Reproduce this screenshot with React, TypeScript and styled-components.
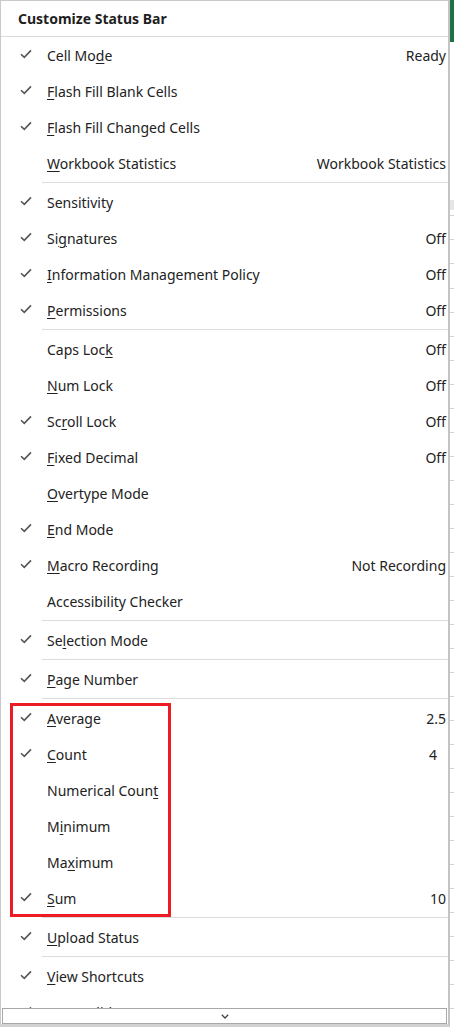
import React from 'react';
import styled, { createGlobalStyle } from 'styled-components';

const GlobalStyle = createGlobalStyle`
  html, body {
    margin: 0;
    padding: 0;
    background: #ffffff;
  }
  body {
    font-family: 'Noto Sans', 'Open Sans', sans-serif;
    color: #222;
  }
`;

const Screen = styled.div`
  display: flex;
  width: 454px;
  height: 1027px;
  overflow: hidden;
`;

const Menu = styled.div`
  position: relative;
  box-sizing: border-box;
  width: 450px;
  height: 1027px;
  display: flex;
  flex-direction: column;
  background: #fff;
  border: 1px solid #c9c9c9;
  border-right: 2px solid #c4c4c4;
  border-bottom: 3px solid #d2d2d2;
`;

const Header = styled.div`
  flex: none;
  height: 35px;
  display: flex;
  align-items: center;
  padding-left: 17px;
  font-size: 14px;
  font-weight: 700;
  color: #1f1f1f;
  border-bottom: 1px solid #dadada;
`;

const List = styled.div`
  flex: 1;
  overflow: hidden;
  display: flex;
  flex-direction: column;
`;

const Row = styled.div`
  flex: none;
  height: 36px;
  display: grid;
  grid-template-columns: 46px 1fr auto;
  align-items: center;
  font-size: 14px;
  color: #222;
`;

const CheckCell = styled.div`
  display: flex;
  justify-content: center;
  padding-left: 4px;
  margin-top: -3px;
`;

const Label = styled.span`
  white-space: nowrap;

  u {
    text-decoration: underline;
    text-underline-offset: 2px;
    text-decoration-thickness: 1px;
  }
`;

const Value = styled.span<{ $inset?: number }>`
  white-space: nowrap;
  padding-right: ${({ $inset }) => 2 + ($inset ?? 0)}px;
`;

const Separator = styled.div`
  flex: none;
  height: 3px;
  display: flex;
  align-items: center;
  padding-left: 41px;

  &::after {
    content: '';
    flex: 1;
    height: 1px;
    background: #dcdcdc;
  }
`;

const ScrollDown = styled.div`
  flex: none;
  box-sizing: border-box;
  height: 16px;
  margin: 0 1px 0 1px;
  border: 1px solid #a8a8a8;
  display: flex;
  align-items: center;
  justify-content: center;
  background: #fff;
`;

const Highlight = styled.div`
  position: absolute;
  left: 9px;
  top: 702px;
  width: 161px;
  height: 214px;
  box-sizing: border-box;
  border: 3px solid #ed1c24;
  pointer-events: none;
`;

const SheetEdge = styled.div`
  flex: 1;
  display: flex;
  flex-direction: column;
  background: #fff;
`;

const RibbonTab = styled.div`
  height: 42px;
  background: #1e7145;
`;

const SheetGap = styled.div`
  height: 158px;
`;

const ColumnHeader = styled.div`
  height: 10px;
  background: #e6e6e6;
`;

const Grid = styled.div`
  flex: 1;
  background: repeating-linear-gradient(
    to bottom,
    #fff 0,
    #fff 23px,
    #d4d4d4 23px,
    #d4d4d4 24px
  );
  background-position: 0 55px;
`;

const Check: React.FC = () => (
  <svg width="12" height="10" viewBox="0 0 12 10" aria-hidden="true">
    <path d="M1 5.2 L4.3 8.4 L11 1.4" fill="none" stroke="#555" strokeWidth="1.6" />
  </svg>
);

type Item = {
  label: React.ReactNode;
  checked?: boolean;
  value?: string;
  inset?: number;
};

type Entry = Item | 'sep';

const u = (before: string, key: string, after: string) => (
  <>
    {before}
    <u>{key}</u>
    {after}
  </>
);

const entries: Entry[] = [
  { label: u('Cell Mo', 'd', 'e'), checked: true, value: 'Ready' },
  { label: u('', 'F', 'lash Fill Blank Cells'), checked: true },
  { label: u('', 'F', 'lash Fill Changed Cells'), checked: true },
  { label: u('', 'W', 'orkbook Statistics'), value: 'Workbook Statistics' },
  'sep',
  { label: 'Sensitivity', checked: true },
  { label: u('Si', 'g', 'natures'), checked: true, value: 'Off' },
  { label: u('', 'I', 'nformation Management Policy'), checked: true, value: 'Off' },
  { label: u('', 'P', 'ermissions'), checked: true, value: 'Off' },
  'sep',
  { label: u('Caps Loc', 'k', ''), value: 'Off' },
  { label: u('', 'N', 'um Lock'), value: 'Off' },
  { label: u('Sc', 'r', 'oll Lock'), checked: true, value: 'Off' },
  { label: u('', 'F', 'ixed Decimal'), checked: true, value: 'Off' },
  { label: u('', 'O', 'vertype Mode') },
  { label: u('', 'E', 'nd Mode'), checked: true },
  { label: u('', 'M', 'acro Recording'), checked: true, value: 'Not Recording' },
  { label: 'Accessibility Checker' },
  'sep',
  { label: u('Se', 'l', 'ection Mode'), checked: true },
  'sep',
  { label: u('', 'P', 'age Number'), checked: true },
  'sep',
  { label: u('', 'A', 'verage'), checked: true, value: '2.5' },
  { label: u('', 'C', 'ount'), checked: true, value: '4', inset: 9 },
  { label: u('Numerical Coun', 't', '') },
  { label: u('M', 'i', 'nimum') },
  { label: u('Ma', 'x', 'imum') },
  { label: u('', 'S', 'um'), checked: true, value: '10' },
  'sep',
  { label: u('', 'U', 'pload Status'), checked: true },
  'sep',
  { label: u('', 'V', 'iew Shortcuts'), checked: true },
  { label: u('', 'Z', 'oom Slider'), checked: true },
];

const App: React.FC = () => (
  <>
    <GlobalStyle />
    <Screen>
      <Menu>
        <Header>Customize Status Bar</Header>
        <List>
          {entries.map((entry, i) =>
            entry === 'sep' ? (
              <Separator key={i} />
            ) : (
              <Row key={i}>
                <CheckCell>{entry.checked && <Check />}</CheckCell>
                <Label>{entry.label}</Label>
                <Value $inset={entry.inset}>{entry.value}</Value>
              </Row>
            )
          )}
        </List>
        <ScrollDown>
          <svg width="8" height="5" viewBox="0 0 8 5" aria-hidden="true">
            <path d="M0.8 0.8 L4 4 L7.2 0.8" fill="none" stroke="#444" strokeWidth="1.3" />
          </svg>
        </ScrollDown>
        <Highlight />
      </Menu>
      <SheetEdge>
        <RibbonTab />
        <SheetGap />
        <ColumnHeader />
        <Grid />
      </SheetEdge>
    </Screen>
  </>
);

export default App;
